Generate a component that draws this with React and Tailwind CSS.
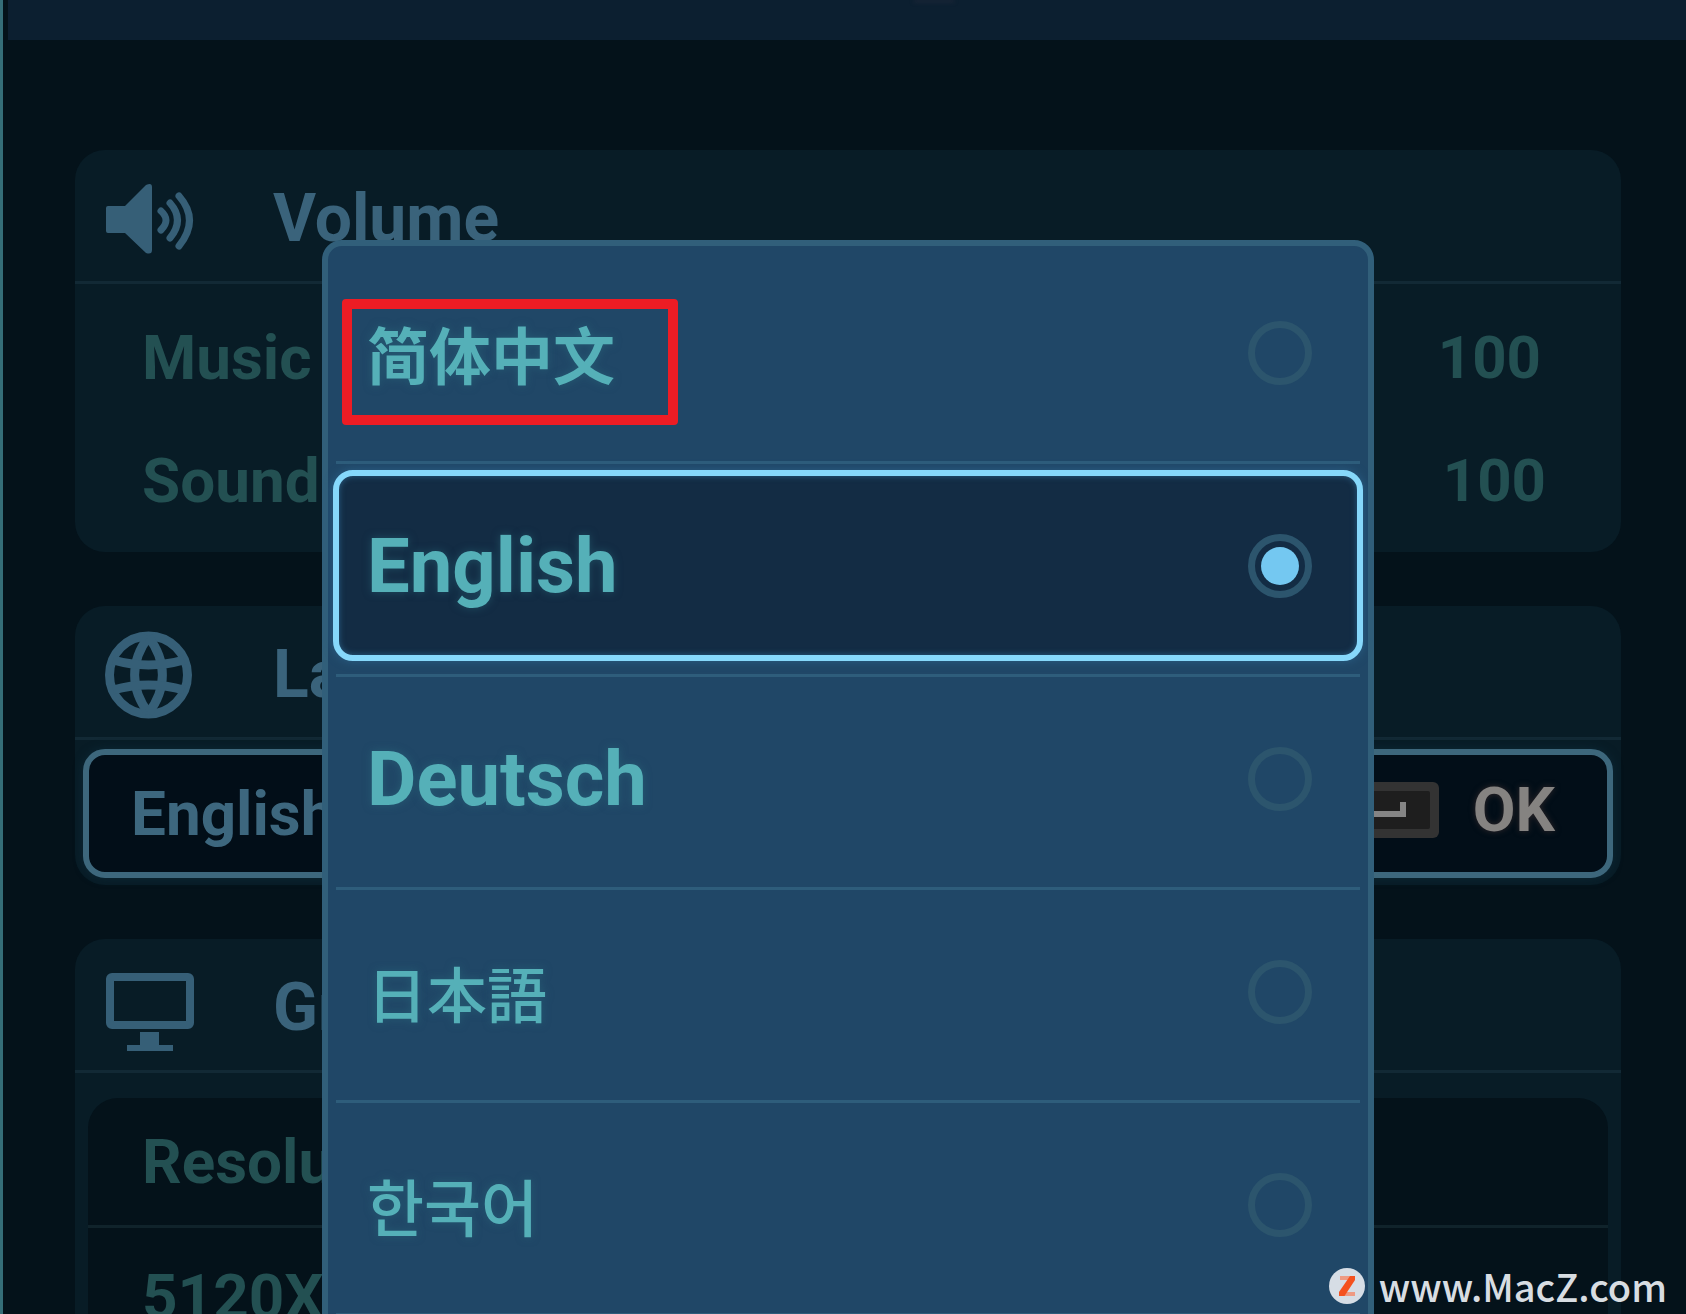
import React, { useState } from "react";

const languages = [
  { id: "zh", label: "简体中文", style: "font-['Noto_Sans_CJK_SC',sans-serif] font-bold text-[62px]" },
  { id: "en", label: "English", style: "font-[Roboto,sans-serif] font-bold text-[76px]" },
  { id: "de", label: "Deutsch", style: "font-[Roboto,sans-serif] font-bold text-[76px]" },
  { id: "ja", label: "日本語", style: "font-['Noto_Sans_CJK_JP',sans-serif] font-medium text-[60px]" },
  { id: "ko", label: "한국어", style: "font-['Noto_Sans_CJK_KR',sans-serif] font-medium text-[62px]" },
];

const SpeakerIcon = () => (
  <svg viewBox="0 0 90 90" className="size-[90px] shrink-0" fill="none" aria-hidden="true">
    <path
      d="M3 32H20L41 11Q47 8 47 13V76Q47 81 41 79L20 59H3Q1 59 1 57V34Q1 32 3 32Z"
      fill="#365f77"
    />
    <g stroke="#365f77" strokeWidth="7" strokeLinecap="round">
      <path d="M56 37Q66 46 56 56" />
      <path d="M65 29Q80 46 65 64" />
      <path d="M74 22Q95 46 74 72" />
    </g>
  </svg>
);

const GlobeIcon = () => (
  <svg viewBox="0 0 90 90" className="size-[90px] shrink-0" fill="none" stroke="#365f77" strokeWidth="9" aria-hidden="true">
    <circle cx="43.500" cy="45" r="39" />
    <path d="M43.500 7C25 31 25 59 43.500 83" />
    <path d="M43.500 7C62 31 62 59 43.500 83" />
    <path d="M8 30Q43.500 40 79 30" />
    <path d="M8 60Q43.500 50 79 60" />
  </svg>
);

const MonitorIcon = () => (
  <svg viewBox="0 0 90 90" className="size-[90px] shrink-0" fill="none" aria-hidden="true">
    <rect x="5" y="14" width="80" height="48" rx="2" stroke="#365f77" strokeWidth="8" />
    <path d="M35 69H54V82H68V88H22V82H35Z" fill="#365f77" />
  </svg>
);

const Card = ({ icon, title, children }) => (
  <section className="rounded-[30px] bg-[#081c26]">
    <div className="flex h-[134px] items-center gap-[78px] border-b-3 border-[#122935] pt-[6px] pl-[30px]">
      {icon}
      <h2 className="text-[66px] leading-none text-[#3a637b]">{title}</h2>
    </div>
    {children}
  </section>
);

const VolumeRow = ({ label, value, pad }) => (
  <div className={`flex h-[123px] items-center justify-between pl-[67px] text-[#235052] ${pad}`}>
    <span className="text-[62px] leading-none">{label}</span>
    <span className="text-[60px] leading-none">{value}</span>
  </div>
);

const LanguageOption = ({ lang, selected, onSelect }) => (
  <li className="h-[213px] border-b-3 border-[#2e5d7b]">
    <div className="pt-[6px]">
      <label
        className={`-mx-[3px] flex h-[191px] items-center justify-between rounded-[20px] border-6 pr-[45px] pl-[28px] ${
          selected
            ? "border-[#86d8fb] bg-[#132c44] shadow-[0_0_10px_#2a5f85,inset_0_0_6px_#2a5f85]"
            : "border-transparent"
        }`}
      >
        <span className={`leading-none text-[#55b0b8] [text-shadow:0_0_8px_#2b708080] ${lang.style}`}>
          {lang.label}
        </span>
        <input
          type="radio"
          name="language"
          checked={selected}
          onChange={() => onSelect(lang.id)}
          className="size-[64px] shrink-0 appearance-none rounded-full border-7 border-[#2c556d] bg-clip-content p-[6px] checked:bg-[#74c8f1]"
        />
      </label>
    </div>
  </li>
);

const App = () => {
  const [current, setCurrent] = useState("en");

  return (
    <div className="relative h-screen overflow-hidden border-l-3 border-[#356e78] bg-[#04121a] font-[Roboto,sans-serif] font-bold">
      <header className="ml-[5px] h-[40px] bg-[#0c1f30]">
        <div className="ml-[54%] h-[2px] w-[40px] bg-[#232a3a] blur-[2px]" />
      </header>

      <main className="flex flex-col gap-[54px] pt-[110px] pr-[65px] pl-[72px]">
        <Card icon={<SpeakerIcon />} title="Volume">
          <div className="pt-[12px] pb-[10px]">
            <VolumeRow label="Music" value="100" pad="pr-[80px]" />
            <VolumeRow label="Sound" value="100" pad="pr-[75px]" />
          </div>
        </Card>

        <Card icon={<GlobeIcon />} title="Language">
          <div className="px-[8px] pt-[9px] pb-[7px]">
            <button
              type="button"
              className="flex h-[129px] w-full items-center justify-between rounded-[22px] border-6 border-[#3d677c] bg-[#020e18] pr-[52px] pl-[42px] shadow-[0_0_10px_#0c2836]"
            >
              <span className="text-[62px] leading-none text-[#3d677e]">English</span>
              <span className="flex items-center gap-[34px] pb-[8px]">
                <svg viewBox="0 0 120 56" className="h-[56px] w-[120px]" fill="none" aria-hidden="true">
                  <rect width="120" height="56" rx="6" fill="#333333" />
                  <rect x="9" y="9" width="102" height="38" rx="2" fill="#1e1e1e" />
                  <path d="M84 20V32H42" stroke="#858585" strokeWidth="6" />
                  <path d="M50 24L42 32L50 40" stroke="#858585" strokeWidth="6" />
                </svg>
                <span className="text-[62px] leading-none text-[#858381] [text-shadow:0_0_6px_#30282a]">OK</span>
              </span>
            </button>
          </div>
        </Card>

        <Card icon={<MonitorIcon />} title="Graphics">
          <div className="mx-[13px] mt-[25px] rounded-t-[30px] bg-[#04121a] text-[62px] leading-none text-[#235052]">
            <div className="flex h-[130px] items-center border-b-3 border-[#10232b] pl-[54px]">Resolution</div>
            <div className="flex h-[138px] items-center pl-[54px]">5120X2880</div>
          </div>
        </Card>
      </main>

      {/* language picker */}
      <div className="absolute inset-0 left-[7px] flex items-start justify-center pt-[240px]">
        <div
          role="dialog"
          aria-label="Language"
          className="relative w-full max-w-[1052px] rounded-[20px] border-6 border-[#315f7a] bg-[#204767] px-[8px] pt-[5px] pb-[20px]"
        >
          <ul>
            {languages.map((lang) => (
              <LanguageOption
                key={lang.id}
                lang={lang}
                selected={lang.id === current}
                onSelect={setCurrent}
              />
            ))}
          </ul>
          {/* highlight over the first entry */}
          <div className="pointer-events-none absolute top-[53px] left-[14px] h-[126px] w-[336px] rounded-[4px] border-10 border-[#ed1c24]" />
        </div>
      </div>

      {/* watermark */}
      <a
        href="#"
        className="absolute right-[19px] bottom-[6px] flex items-center gap-[14px] font-['Noto_Sans_CJK_SC',sans-serif] text-[38px] leading-[44px] font-medium text-[#d8dde2]"
      >
        <svg viewBox="0 0 36 36" className="size-[36px]" aria-hidden="true">
          <circle cx="18" cy="18" r="18" fill="#d6dde5" />
          <path d="M11 8H26V12H11ZM11 24H26V28H11Z" fill="#ee9a83" />
          <path d="M21 8H26V12L15.500 28H10V24Z" fill="#f4511e" />
        </svg>
        <span>www.MacZ.com</span>
      </a>
    </div>
  );
};

export default App;
